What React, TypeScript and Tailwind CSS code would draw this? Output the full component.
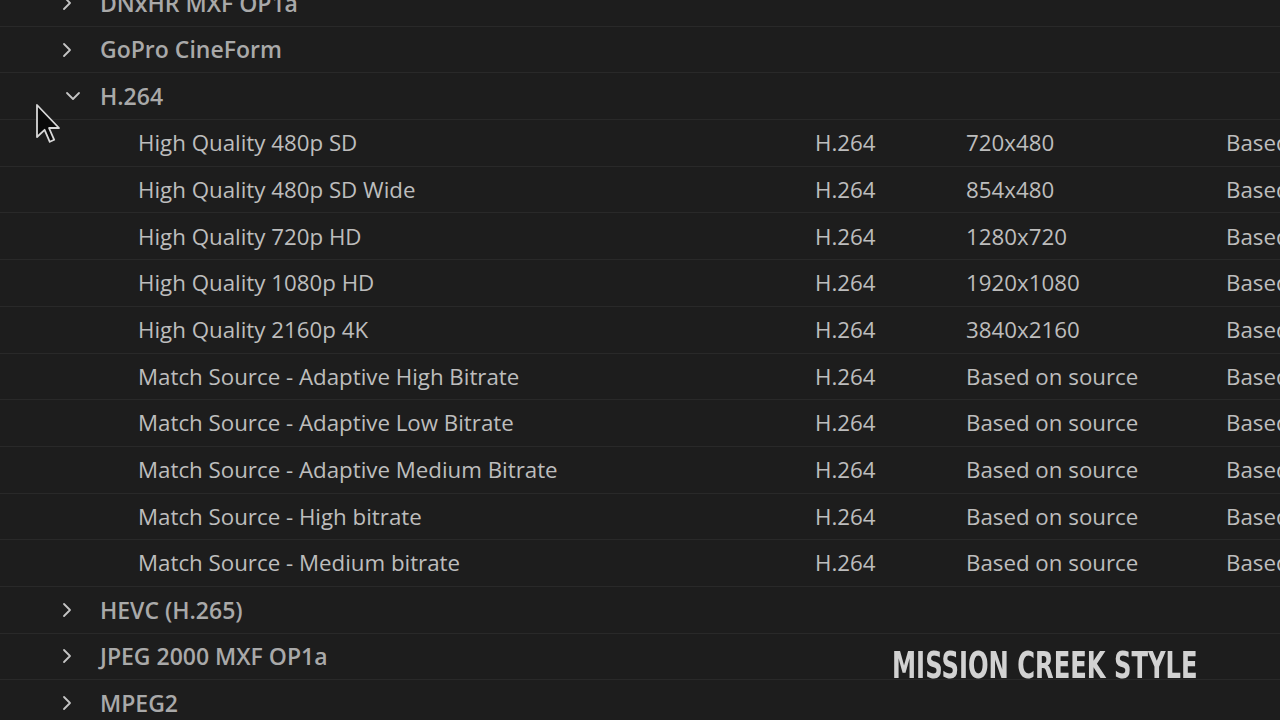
import React from "react";

const baseFont = { fontFamily: '"Open Sans", "Liberation Sans", sans-serif' };

function Chevron({ open }: { open?: boolean }) {
  return open ? (
    <svg width="16" height="10" viewBox="0 0 16 10" className="ml-[3px]">
      <path d="M2 2 L8 8 L14 2" fill="none" stroke="#c4c4c4" strokeWidth="1.8" strokeLinecap="round" strokeLinejoin="round" />
    </svg>
  ) : (
    <svg width="10" height="16" viewBox="0 0 10 16">
      <path d="M2 2 L8 8 L2 14" fill="none" stroke="#c4c4c4" strokeWidth="1.8" strokeLinecap="round" strokeLinejoin="round" />
    </svg>
  );
}

function Header({ label, open }: { label: string; open?: boolean }) {
  return (
    <div className="flex h-[46.7px] shrink-0 items-center border-b border-[#292929] pl-[62px]">
      <div className="flex w-[38px] items-center">
        <Chevron open={open} />
      </div>
      <span className="whitespace-nowrap text-[23px] font-semibold text-[#a9a9a9]">{label}</span>
    </div>
  );
}

function Child({ name, fmt, res }: { name: string; fmt: string; res: string }) {
  return (
    <div className="flex h-[46.7px] shrink-0 items-center whitespace-nowrap border-b border-[#292929] pl-[138px] text-[22.3px] text-[#bdbdbd]">
      <span className="w-[677px] shrink-0">{name}</span>
      <span className="w-[151px] shrink-0">{fmt}</span>
      <span className="w-[260px] shrink-0">{res}</span>
      <span className="shrink-0">Based on source</span>
    </div>
  );
}

const children = [
  ["High Quality 480p SD", "720x480"],
  ["High Quality 480p SD Wide", "854x480"],
  ["High Quality 720p HD", "1280x720"],
  ["High Quality 1080p HD", "1920x1080"],
  ["High Quality 2160p 4K", "3840x2160"],
  ["Match Source - Adaptive High Bitrate", "Based on source"],
  ["Match Source - Adaptive Low Bitrate", "Based on source"],
  ["Match Source - Adaptive Medium Bitrate", "Based on source"],
  ["Match Source - High bitrate", "Based on source"],
  ["Match Source - Medium bitrate", "Based on source"],
];

export default function App() {
  return (
    <div className="relative h-[720px] w-[1280px] overflow-hidden bg-[#1d1d1d]" style={baseFont}>
      <div className="-mt-[20px] flex flex-col">
        <Header label="DNxHR MXF OP1a" />
        <Header label="GoPro CineForm" />
        <Header label="H.264" open />
        {children.map(([n, r]) => (
          <Child key={n} name={n} fmt="H.264" res={r} />
        ))}
        <Header label="HEVC (H.265)" />
        <Header label="JPEG 2000 MXF OP1a" />
        <Header label="MPEG2" />
      </div>

      <svg className="absolute left-[35px] top-[103px] blur-[0.5px]" width="26" height="42" viewBox="0 0 13 21">
        <path d="M1 1 L1 17 L4.8 13.4 L7.4 19.4 L9.6 18.4 L7 12.5 L12 12.5 Z" fill="#0a0a0a" stroke="#d8d8d8" strokeWidth="0.9" strokeLinejoin="round" />
      </svg>

      <div className="absolute left-[892px] top-[638px] origin-left scale-x-[0.655] whitespace-nowrap text-[37px] font-bold text-[#d2d2d2]" style={{ fontFamily: '"DejaVu Sans", sans-serif' }}>
        MISSION CREEK STYLE
      </div>
    </div>
  );
}
